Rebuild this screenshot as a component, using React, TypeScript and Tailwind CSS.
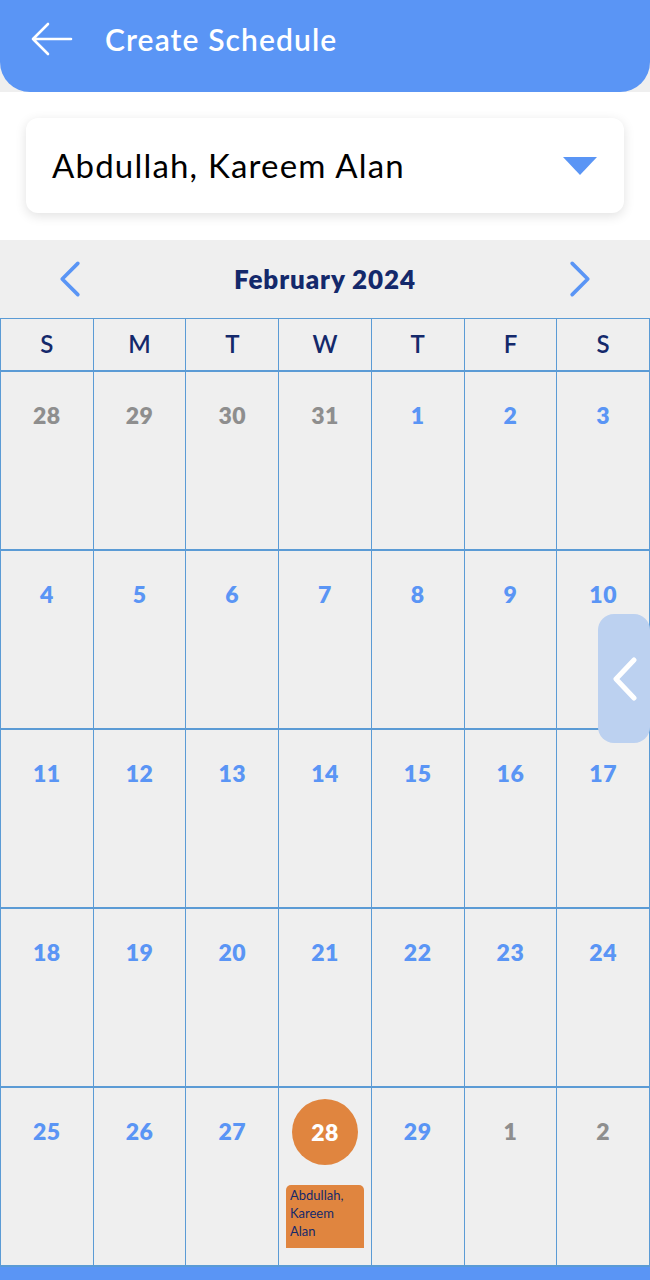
import { useState } from "react";

type Day = { n: number; current: boolean };

const weekdays = ["S", "M", "T", "W", "T", "F", "S"];

const buildDays = (): Day[] => {
  const days: Day[] = [];
  [28, 29, 30, 31].forEach((n) => days.push({ n, current: false }));
  for (let n = 1; n <= 29; n++) days.push({ n, current: true });
  [1, 2].forEach((n) => days.push({ n, current: false }));
  return days;
};

const ChevronLeft = ({ className }: { className?: string }) => (
  <svg viewBox="0 0 24 36" className={className} fill="none" stroke="currentColor" strokeLinecap="round" strokeLinejoin="round">
    <path d="M20 3L5 18l15 15" />
  </svg>
);

const ChevronRight = ({ className }: { className?: string }) => (
  <svg viewBox="0 0 24 36" className={className} fill="none" stroke="currentColor" strokeLinecap="round" strokeLinejoin="round">
    <path d="M4 3l15 15L4 33" />
  </svg>
);

export default function App() {
  const [selected] = useState(28);
  const days = buildDays();

  return (
    <div className="relative min-h-[1280px] w-full bg-[#efefef] font-['Lato','Noto_Sans',sans-serif]">
      {/* Header */}
      <header className="flex h-[92px] items-center rounded-b-[30px] bg-[#5a95f5] pb-[14px] text-white">
        <button className="ml-[31px] flex h-[40px] w-[44px] items-center">
          <svg viewBox="0 0 42 34" className="h-[34px] w-[42px]" fill="none" stroke="white" strokeWidth="2.6" strokeLinecap="round" strokeLinejoin="round">
            <path d="M2 17h38M17 2L2 17l15 15" />
          </svg>
        </button>
        <h1 className="ml-[30px] text-[30px] font-semibold tracking-[1.1px]">Create Schedule</h1>
      </header>

      {/* Employee select */}
      <div className="bg-white px-[26px] pb-[27px] pt-[26px]">
        <div className="flex h-[95px] items-center justify-between rounded-[12px] bg-white pl-[26px] pr-[27px] shadow-[0_3px_12px_rgba(0,0,0,0.12)]">
          <span className="text-[33px] tracking-[1.2px] text-black">Abdullah, Kareem Alan</span>
          <svg viewBox="0 0 34 18" className="h-[18px] w-[34px]">
            <path d="M0 0h34L17 18z" fill="#5a95f5" />
          </svg>
        </div>
      </div>

      {/* Month navigation */}
      <div className="flex h-[78px] items-center justify-between px-[57px]">
        <ChevronLeft className="h-[38px] w-[25px] stroke-[3.5] text-[#5a95f5]" />
        <h2 className="text-[26px] font-extrabold tracking-[0.9px] text-[#14296b]">February 2024</h2>
        <ChevronRight className="h-[38px] w-[25px] stroke-[3.5] text-[#5a95f5]" />
      </div>

      {/* Calendar grid */}
      <div className="grid grid-cols-7 border-l border-t border-[#5b9bd5]">
        {weekdays.map((d, i) => (
          <div
            key={i}
            className="flex h-[53px] items-center justify-center border-b-2 border-r border-[#5b9bd5] pb-[1px] text-[24px] font-semibold text-[#14296b]"
          >
            {d}
          </div>
        ))}
        {days.map((d, i) => {
          const isSel = d.current && d.n === selected;
          return (
            <div key={i} className="flex h-[179px] flex-col items-center border-b-2 border-r border-[#5b9bd5] pt-[10px]">
              {isSel ? (
                <div className="mt-[1px] flex h-[66px] w-[66px] items-center justify-center rounded-full bg-[#e0853f] text-[23px] font-extrabold tracking-[0.5px] text-white">
                  {d.n}
                </div>
              ) : (
                <div
                  className={`flex h-[66px] items-center justify-center text-[23px] font-extrabold tracking-[0.5px] ${
                    d.current ? "text-[#5a95f5]" : "text-[#8e8e8e]"
                  }`}
                >
                  {d.n}
                </div>
              )}
              {isSel && (
                <div className="mt-[20px] h-[63px] w-[78px] rounded-t-[5px] bg-[#e0853f] px-[4px] pt-[1px] text-[13px] leading-[18px] text-[#14296b]">
                  Abdullah, Kareem Alan
                </div>
              )}
            </div>
          );
        })}
      </div>

      {/* Bottom bar */}
      <div className="h-[14px] bg-[#5a95f5]" />

      {/* Side drawer tab */}
      <button className="absolute right-0 top-[614px] flex h-[129px] w-[52px] items-center justify-center rounded-[16px] bg-[#bcd1f0]">
        <svg viewBox="0 0 24 44" className="ml-[2px] h-[44px] w-[24px]" fill="none" stroke="white" strokeWidth="5" strokeLinecap="round" strokeLinejoin="round">
          <path d="M21 3L3 22l18 19" />
        </svg>
      </button>
    </div>
  );
}
